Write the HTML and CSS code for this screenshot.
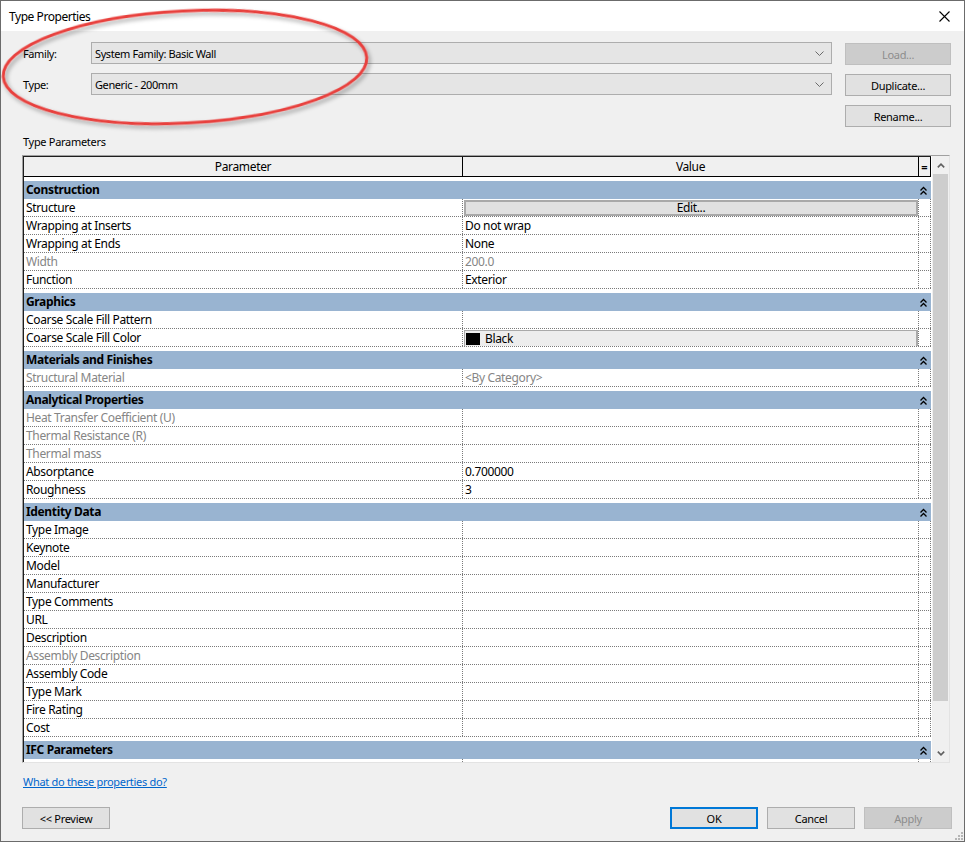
FILE: index.html
```html
<!DOCTYPE html>
<html>
<head>
<meta charset="utf-8">
<title>Type Properties</title>
<link rel="stylesheet" href="styles.css">
</head>
<body>
<div class="window">
  <div class="titlebar">
    <span class="title">Type Properties</span>
    <svg class="close" width="11" height="11" viewBox="0 0 11 11"><path d="M0.5 0.5L10.5 10.5M10.5 0.5L0.5 10.5" stroke="#000" stroke-width="1.1" fill="none"/></svg>
  </div>
  <div class="content">
    <div class="top">
      <span class="lbl">Family:</span>
      <div class="combo"><span>System Family: Basic Wall</span><svg width="9" height="5" viewBox="0 0 9 5"><path d="M0.5 0.5L4.5 4.5L8.5 0.5" stroke="#6a6a6a" fill="none"/></svg></div>
      <div class="btn disabled">Load...</div>
      <span class="lbl">Type:</span>
      <div class="combo"><span>Generic - 200mm</span><svg width="9" height="5" viewBox="0 0 9 5"><path d="M0.5 0.5L4.5 4.5L8.5 0.5" stroke="#6a6a6a" fill="none"/></svg></div>
      <div class="btn">Duplicate...</div>
      <div class="btn rename">Rename...</div>
    </div>

    <div class="params-label">Type Parameters</div>

    <div class="frame">
      <div class="grid">
        <div class="hdr">
          <div class="hcell">Parameter</div>
          <div class="hcell">Value</div>
          <div class="hcell eq">=</div>
        </div>

        <div class="sect"><span>Construction</span><svg class="dchev" width="7" height="9" viewBox="0 0 7 9"><path d="M0.5 4.5L3.5 1.5L6.5 4.5M0.5 8.5L3.5 5.5L6.5 8.5" stroke="#000" stroke-width="1.3" fill="none"/></svg></div>
        <div class="row"><div class="c p">Structure</div><div class="c v nopad"><div class="edit">Edit...</div></div><div class="c e"></div></div>
        <div class="row"><div class="c p">Wrapping at Inserts</div><div class="c v">Do not wrap</div><div class="c e"></div></div>
        <div class="row"><div class="c p">Wrapping at Ends</div><div class="c v">None</div><div class="c e"></div></div>
        <div class="row dim"><div class="c p">Width</div><div class="c v">200.0</div><div class="c e"></div></div>
        <div class="row"><div class="c p">Function</div><div class="c v">Exterior</div><div class="c e"></div></div>

        <div class="sect"><span>Graphics</span><svg class="dchev" width="7" height="9" viewBox="0 0 7 9"><path d="M0.5 4.5L3.5 1.5L6.5 4.5M0.5 8.5L3.5 5.5L6.5 8.5" stroke="#000" stroke-width="1.3" fill="none"/></svg></div>
        <div class="row"><div class="c p">Coarse Scale Fill Pattern</div><div class="c v"></div><div class="c e"></div></div>
        <div class="row"><div class="c p">Coarse Scale Fill Color</div><div class="c v nopad"><div class="colorbox"><span class="swatch"></span><span>Black</span></div></div><div class="c e"></div></div>

        <div class="sect"><span>Materials and Finishes</span><svg class="dchev" width="7" height="9" viewBox="0 0 7 9"><path d="M0.5 4.5L3.5 1.5L6.5 4.5M0.5 8.5L3.5 5.5L6.5 8.5" stroke="#000" stroke-width="1.3" fill="none"/></svg></div>
        <div class="row dim"><div class="c p">Structural Material</div><div class="c v">&lt;By Category&gt;</div><div class="c e"></div></div>

        <div class="sect"><span>Analytical Properties</span><svg class="dchev" width="7" height="9" viewBox="0 0 7 9"><path d="M0.5 4.5L3.5 1.5L6.5 4.5M0.5 8.5L3.5 5.5L6.5 8.5" stroke="#000" stroke-width="1.3" fill="none"/></svg></div>
        <div class="row dim"><div class="c p">Heat Transfer Coefficient (U)</div><div class="c v"></div><div class="c e"></div></div>
        <div class="row dim"><div class="c p">Thermal Resistance (R)</div><div class="c v"></div><div class="c e"></div></div>
        <div class="row dim"><div class="c p">Thermal mass</div><div class="c v"></div><div class="c e"></div></div>
        <div class="row"><div class="c p">Absorptance</div><div class="c v">0.700000</div><div class="c e"></div></div>
        <div class="row"><div class="c p">Roughness</div><div class="c v">3</div><div class="c e"></div></div>

        <div class="sect"><span>Identity Data</span><svg class="dchev" width="7" height="9" viewBox="0 0 7 9"><path d="M0.5 4.5L3.5 1.5L6.5 4.5M0.5 8.5L3.5 5.5L6.5 8.5" stroke="#000" stroke-width="1.3" fill="none"/></svg></div>
        <div class="row"><div class="c p">Type Image</div><div class="c v"></div><div class="c e"></div></div>
        <div class="row"><div class="c p">Keynote</div><div class="c v"></div><div class="c e"></div></div>
        <div class="row"><div class="c p">Model</div><div class="c v"></div><div class="c e"></div></div>
        <div class="row"><div class="c p">Manufacturer</div><div class="c v"></div><div class="c e"></div></div>
        <div class="row"><div class="c p">Type Comments</div><div class="c v"></div><div class="c e"></div></div>
        <div class="row"><div class="c p">URL</div><div class="c v"></div><div class="c e"></div></div>
        <div class="row"><div class="c p">Description</div><div class="c v"></div><div class="c e"></div></div>
        <div class="row dim"><div class="c p">Assembly Description</div><div class="c v"></div><div class="c e"></div></div>
        <div class="row"><div class="c p">Assembly Code</div><div class="c v"></div><div class="c e"></div></div>
        <div class="row"><div class="c p">Type Mark</div><div class="c v"></div><div class="c e"></div></div>
        <div class="row"><div class="c p">Fire Rating</div><div class="c v"></div><div class="c e"></div></div>
        <div class="row"><div class="c p">Cost</div><div class="c v"></div><div class="c e"></div></div>

        <div class="sect"><span>IFC Parameters</span><svg class="dchev" width="7" height="9" viewBox="0 0 7 9"><path d="M0.5 4.5L3.5 1.5L6.5 4.5M0.5 8.5L3.5 5.5L6.5 8.5" stroke="#000" stroke-width="1.3" fill="none"/></svg></div>
        <div class="row"><div class="c p"></div><div class="c v"></div><div class="c e"></div></div>
      </div>
      <div class="sbgap"></div>
      <div class="scroll">
        <div class="sb-up"><svg width="8" height="5" viewBox="0 0 8 5"><path d="M0.8 4.4L4 1.2L7.2 4.4" stroke="#606060" stroke-width="1.6" fill="none"/></svg></div>
        <div class="track"><div class="thumb"></div></div>
        <div class="sb-down"><svg width="8" height="5" viewBox="0 0 8 5"><path d="M0.8 0.6L4 3.8L7.2 0.6" stroke="#606060" stroke-width="1.6" fill="none"/></svg></div>
      </div>
    </div>

    <a class="help" href="#">What do these properties do?</a>

    <div class="footer">
      <div class="btn preview">&lt;&lt; Preview</div>
      <div class="actions">
        <div class="btn ok">OK</div>
        <div class="btn">Cancel</div>
        <div class="btn disabled">Apply</div>
      </div>
    </div>
  </div>

  <svg class="grip" width="9" height="9" viewBox="0 0 9 9">
    <rect x="7" y="1" width="2" height="2" fill="#b5b5b5"/>
    <rect x="4" y="4" width="2" height="2" fill="#b5b5b5"/>
    <rect x="7" y="4" width="2" height="2" fill="#b5b5b5"/>
    <rect x="1" y="7" width="2" height="2" fill="#b5b5b5"/>
    <rect x="4" y="7" width="2" height="2" fill="#b5b5b5"/>
    <rect x="7" y="7" width="2" height="2" fill="#b5b5b5"/>
  </svg>

  <svg class="annot" width="400" height="140" viewBox="0 0 400 140">
    <defs>
      <filter id="sh" x="-10%" y="-20%" width="120%" height="150%">
        <feDropShadow dx="2" dy="3" stdDeviation="2" flood-color="#000" flood-opacity="0.35"/>
      </filter>
    </defs>
    <ellipse cx="185" cy="67" rx="182" ry="56" transform="rotate(-3 185 67)" fill="none" stroke="#e8403d" stroke-width="3" filter="url(#sh)"/>
  </svg>
</div>
</body>
</html>
```

FILE: styles.css
```css
* { box-sizing: border-box; }

html, body {
  margin: 0;
  padding: 0;
  background: #ffffff;
}

body {
  width: 965px;
  height: 843px;
  overflow: hidden;
  font-family: "Noto Sans", "Open Sans", sans-serif;
  color: #000;
}

.window {
  position: relative;
  width: 965px;
  height: 842px;
  border: 1px solid #6b6b6b;
  background: #f0f0f0;
  display: flex;
  flex-direction: column;
}

.titlebar {
  flex: none;
  height: 30px;
  background: #ffffff;
  display: flex;
  align-items: center;
  justify-content: space-between;
  padding: 0 14px 0 8px;
}

.title {
  font-size: 12px;
  letter-spacing: -0.45px;
}

.close { display: block; }

.content {
  flex: 1;
  display: flex;
  flex-direction: column;
  padding: 12px 12px 0 21px;
}

/* ---------- top form ---------- */
.top {
  display: grid;
  grid-template-columns: 56px 741px 106px;
  grid-template-rows: 22px 22px 22px;
  column-gap: 13px;
  row-gap: 9px;
  font-size: 11px;
  letter-spacing: -0.4px;
}

.lbl {
  display: flex;
  align-items: center;
  padding-left: 1px;
  margin-top: -1px;
}

.combo {
  display: flex;
  align-items: center;
  justify-content: space-between;
  border: 1px solid #adadad;
  background: #e5e5e5;
  padding: 0 7px 0 3px;
  margin-top: -1px;
  height: 22px;
}

.combo svg { display: block; }

.btn {
  display: flex;
  align-items: center;
  justify-content: center;
  height: 22px;
  border: 1px solid #adadad;
  background: #e1e1e1;
  font-size: 11px;
  letter-spacing: -0.3px;
}

.btn.disabled {
  background: #cccccc;
  border-color: #bfbfbf;
  color: #8d8d8d;
}

.rename { grid-column: 3; }

.params-label {
  margin-top: 8px;
  height: 14px;
  line-height: 14px;
  font-size: 11px;
  letter-spacing: -0.3px;
  padding-left: 1px;
}

/* ---------- property grid ---------- */
.frame {
  margin-top: 6px;
  width: 928px;
  height: 608px;
  border-top: 1px solid #a0a0a0;
  border-left: 1px solid #a0a0a0;
  border-right: 1px solid #e3e3e3;
  border-bottom: 1px solid #e3e3e3;
  background: #ffffff;
  display: flex;
  flex: none;
}

.grid {
  width: 908px;
  height: 606px;
  overflow: hidden;
  border-left: 1px solid #1e1e1e;
  border-top: 1px solid #1e1e1e;
  font-size: 12px;
  letter-spacing: -0.35px;
}

.hdr {
  display: grid;
  grid-template-columns: 439px 456px 12px;
  height: 20px;
  border-bottom: 1px solid #000;
  background: #f0f0f0;
}

.hcell {
  border-right: 1px solid #000;
  text-align: center;
  line-height: 19px;
}

.hcell.eq {
  font-size: 11px;
  font-weight: 700;
  letter-spacing: 0;
}

.sect {
  height: 22px;
  border-top: 4px solid #ffffff;
  background: #99b4d1;
  display: flex;
  align-items: center;
  justify-content: space-between;
  padding: 0 4px 0 2px;
  font-weight: 700;
  line-height: 18px;
}

.dchev { display: block; }

.row {
  display: grid;
  grid-template-columns: 439px 456px 12px;
  height: 18px;
  border-bottom: 1px dotted #7a7a7a;
}

.c {
  border-right: 1px dotted #7a7a7a;
  line-height: 17px;
  white-space: nowrap;
  overflow: hidden;
}

.c.p { padding-left: 2px; }
.c.v { padding-left: 2px; }
.c.nopad { padding: 0; }

.row.dim .c { color: #858585; }

.edit {
  margin: 1px 0 0 1px;
  height: 16px;
  border: 2px solid #a9a9a9;
  background: #e1e1e1;
  text-align: center;
  line-height: 12px;
}

.colorbox {
  margin: 1px 0 0 1px;
  height: 17px;
  border: 1px solid #a9a9a9;
  border-right-width: 2px;
  background: #ededed;
  display: flex;
  align-items: center;
  gap: 5px;
  padding-left: 1px;
  line-height: 15px;
}

.swatch {
  display: block;
  width: 14px;
  height: 12px;
  background: #000;
}

.sbgap {
  width: 1px;
  background: #ffffff;
}

.scroll {
  width: 17px;
  height: 606px;
  background: #f0f0f0;
  display: flex;
  flex-direction: column;
}

.sb-up, .sb-down {
  flex: none;
  display: flex;
  align-items: center;
  justify-content: center;
}

.sb-up { height: 18px; }
.sb-down { height: 17px; }

.sb-up svg, .sb-down svg { display: block; }

.track { flex: 1; }

.thumb {
  margin: 0 1px;
  height: 527px;
  background: #cdcdcd;
}

/* ---------- footer ---------- */
.help {
  margin-top: 12px;
  height: 14px;
  line-height: 14px;
  font-size: 11px;
  letter-spacing: -0.3px;
  color: #0066cc;
  text-decoration: underline;
  align-self: flex-start;
  padding-left: 1px;
}

.footer {
  margin-top: 18px;
  display: flex;
  justify-content: space-between;
}

.preview { width: 88px; }

.actions {
  display: flex;
  gap: 9px;
}

.actions .btn { width: 88px; }

.btn.ok {
  border: 2px solid #0078d7;
}

.grip {
  position: absolute;
  right: 1px;
  bottom: 1px;
}

.annot {
  position: absolute;
  left: -1px;
  top: -1px;
  pointer-events: none;
}
```
